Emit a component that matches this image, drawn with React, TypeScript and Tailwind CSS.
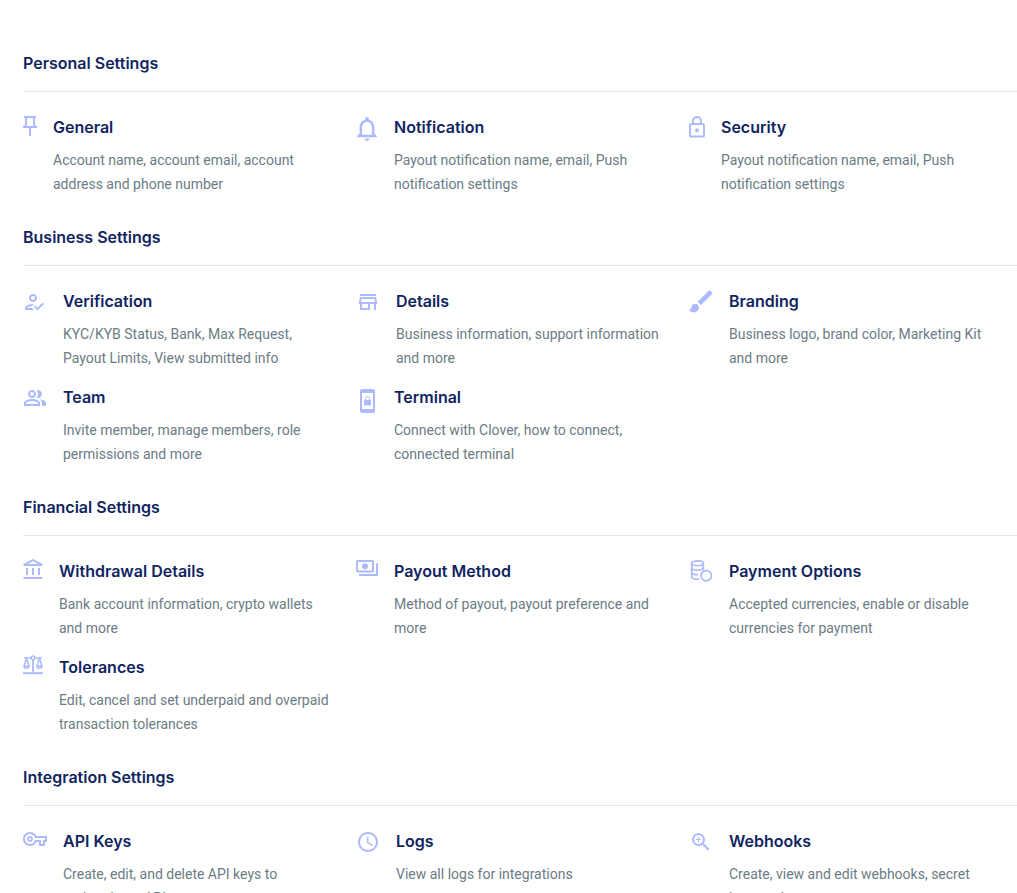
import type { ReactNode } from 'react';
import {
  MdAccessTime,
  MdBrush,
  MdOutlineAccountBalance,
  MdOutlineHowToReg,
  MdOutlineNotifications,
  MdOutlinePeopleAlt,
  MdOutlineStore,
  MdOutlineVpnKey,
  MdZoomIn,
} from 'react-icons/md';

interface SettingItem {
  title: string;
  description: string;
  icon: ReactNode;
}

interface SettingSection {
  title: string;
  items: SettingItem[];
}

function PinIcon() {
  return (
    <svg className="mt-px h-5 w-3.5" viewBox="0 0 14 20" fill="currentColor">
      <path d="M1 0h12v2h-1v6c0 1 .8 1.700 2 2v2H8v8H6v-8H0v-2c1.200-.3 2-1 2-2V2H1zM4 2v6c0 .8-.2 1.400-.6 2h7.200c-.4-.6-.6-1.200-.6-2V2z" />
    </svg>
  );
}

function LockIcon() {
  return (
    <svg
      className="mt-px h-[22px] w-4"
      viewBox="0 0 16 22"
      fill="none"
      stroke="currentColor"
      strokeWidth="2"
    >
      <rect x="1" y="8" width="14" height="12.600" rx="1.2" />
      <path d="M4 8V5a4 4 0 0 1 8 0v3" />
      <circle cx="8" cy="14.200" r="2" fill="currentColor" stroke="none" />
    </svg>
  );
}

function TerminalIcon() {
  return (
    <svg className="mt-1 h-6 w-[22px]" viewBox="0 0 22 24" fill="currentColor">
      <path
        fillRule="evenodd"
        d="M6 0h11a2 2 0 0 1 2 2v20a2 2 0 0 1-2 2H6a2 2 0 0 1-2-2V2a2 2 0 0 1 2-2zM6 4v16h11V4z"
      />
      <rect x="8" y="11" width="7" height="5.500" rx="0.8" />
      <path
        d="M9.500 11V9.700a2 2 0 0 1 4 0V11"
        fill="none"
        stroke="currentColor"
      />
    </svg>
  );
}

function CashIcon() {
  return (
    <svg
      className="mt-px h-4 w-[22px]"
      viewBox="0 0 22 16"
      fill="none"
      stroke="currentColor"
      strokeWidth="2"
    >
      <rect x="1" y="1" width="16" height="10.500" rx="0.8" />
      <path d="M21 3.200V15H3" strokeLinejoin="round" />
      <circle cx="9" cy="6.200" r="3" fill="currentColor" stroke="none" />
    </svg>
  );
}

function CoinsIcon() {
  return (
    <svg
      className="mt-px h-[22px] w-6"
      viewBox="0 0 24 22"
      fill="none"
      stroke="currentColor"
      strokeWidth="1.8"
    >
      <ellipse cx="8.500" cy="3.300" rx="5.800" ry="2.400" />
      <path d="M2.700 3.300v13.400c0 1.500 2.600 2.500 6 2.500h1.500M14.300 3.300v7" />
      <path d="M2.700 7.800c0 1.400 2.600 2.400 5.800 2.400s5.800-1 5.800-2.400M2.700 12.200c0 1.500 2.600 2.500 6.500 2.500" />
      <circle cx="17.200" cy="15.800" r="5.200" />
    </svg>
  );
}

function ScalesIcon() {
  return (
    <svg
      className="h-5 w-5"
      viewBox="0 0 20 20"
      fill="none"
      stroke="currentColor"
      strokeWidth="1.5"
    >
      <path d="M0 18.200h20" strokeWidth="2" />
      <path d="M10 4.500V18" strokeWidth="1.800" />
      <path d="M1 3h7M12 3h7" />
      <circle cx="10" cy="2.800" r="1.900" />
      <path d="M3.500 3.500 1 11h5.200zM16.500 3.500 13.800 11H19z" />
      <path d="M.9 11a2.700 2.700 0 0 0 5.300 0M13.800 11a2.700 2.700 0 0 0 5.300 0" />
    </svg>
  );
}

const sections: SettingSection[] = [
  {
    title: 'Personal Settings',
    items: [
      {
        title: 'General',
        description:
          'Account name, account email, account address and phone number',
        icon: <PinIcon />,
      },
      {
        title: 'Notification',
        description: 'Payout notification name, email, Push notification settings',
        icon: (
          <MdOutlineNotifications
            className="mt-0.5 h-6 w-[22px]"
            viewBox="3.5 2.5 17 19.5"
          />
        ),
      },
      {
        title: 'Security',
        description: 'Payout notification name, email, Push notification settings',
        icon: <LockIcon />,
      },
    ],
  },
  {
    title: 'Business Settings',
    items: [
      {
        title: 'Verification',
        description:
          'KYC/KYB Status, Bank, Max Request, Payout Limits, View submitted info',
        icon: <MdOutlineHowToReg className="mt-px h-6 w-6" viewBox="1 0 24 24" />,
      },
      {
        title: 'Details',
        description: 'Business information, support information and more',
        icon: <MdOutlineStore className="mt-px h-6 w-6" />,
      },
      {
        title: 'Branding',
        description: 'Business logo, brand color, Marketing Kit and more',
        icon: <MdBrush className="mt-px h-6 w-6" viewBox="2 3 19.5 19" />,
      },
      {
        title: 'Team',
        description: 'Invite member, manage members, role permissions and more',
        icon: <MdOutlinePeopleAlt className="mt-px h-6 w-6" />,
      },
      {
        title: 'Terminal',
        description: 'Connect with Clover, how to connect, connected terminal',
        icon: <TerminalIcon />,
      },
    ],
  },
  {
    title: 'Financial Settings',
    items: [
      {
        title: 'Withdrawal Details',
        description: 'Bank account information, crypto wallets and more',
        icon: (
          <MdOutlineAccountBalance className="h-5 w-5" viewBox="2 1 19 20" />
        ),
      },
      {
        title: 'Payout Method',
        description: 'Method of payout, payout preference and more',
        icon: <CashIcon />,
      },
      {
        title: 'Payment Options',
        description: 'Accepted currencies, enable or disable currencies for payment',
        icon: <CoinsIcon />,
      },
      {
        title: 'Tolerances',
        description:
          'Edit, cancel and set underpaid and overpaid transaction tolerances',
        icon: <ScalesIcon />,
      },
    ],
  },
  {
    title: 'Integration Settings',
    items: [
      {
        title: 'API Keys',
        description: 'Create, edit, and delete API keys to authenticate API',
        icon: <MdOutlineVpnKey className="mt-[3px] h-3.5 w-6" viewBox="0 5 24 14" />,
      },
      {
        title: 'Logs',
        description: 'View all logs for integrations',
        icon: <MdAccessTime className="mt-px h-6 w-6" />,
      },
      {
        title: 'Webhooks',
        description: 'Create, view and edit webhooks, secret keys and',
        icon: <MdZoomIn className="mt-px h-6 w-6" />,
      },
    ],
  },
];

function SettingCard({ title, description, icon }: SettingItem) {
  return (
    <div className="flex items-start gap-4 pr-5">
      <div className="shrink-0 text-[#adbbfc]" aria-hidden="true">
        {icon}
      </div>
      <div>
        <h3 className="font-['Inter',sans-serif] text-base font-semibold text-[#10245f]">
          {title}
        </h3>
        <p className="mt-[9px] font-['Roboto',sans-serif] text-sm leading-6 text-[#6b7c85]">
          {description}
        </p>
      </div>
    </div>
  );
}

export default function App() {
  return (
    <main className="min-h-screen bg-white pt-[51px] pl-[23px]">
      {sections.map((section) => (
        <section key={section.title} className="mb-[29px]">
          <h2 className="border-b border-[#e4e5e9] pb-4 font-['Inter',sans-serif] text-base font-semibold text-[#10245f]">
            {section.title}
          </h2>
          <div className="grid grid-cols-3 gap-x-[5px] gap-y-[15px] pt-[23px]">
            {section.items.map((item) => (
              <SettingCard key={item.title} {...item} />
            ))}
          </div>
        </section>
      ))}
    </main>
  );
}
